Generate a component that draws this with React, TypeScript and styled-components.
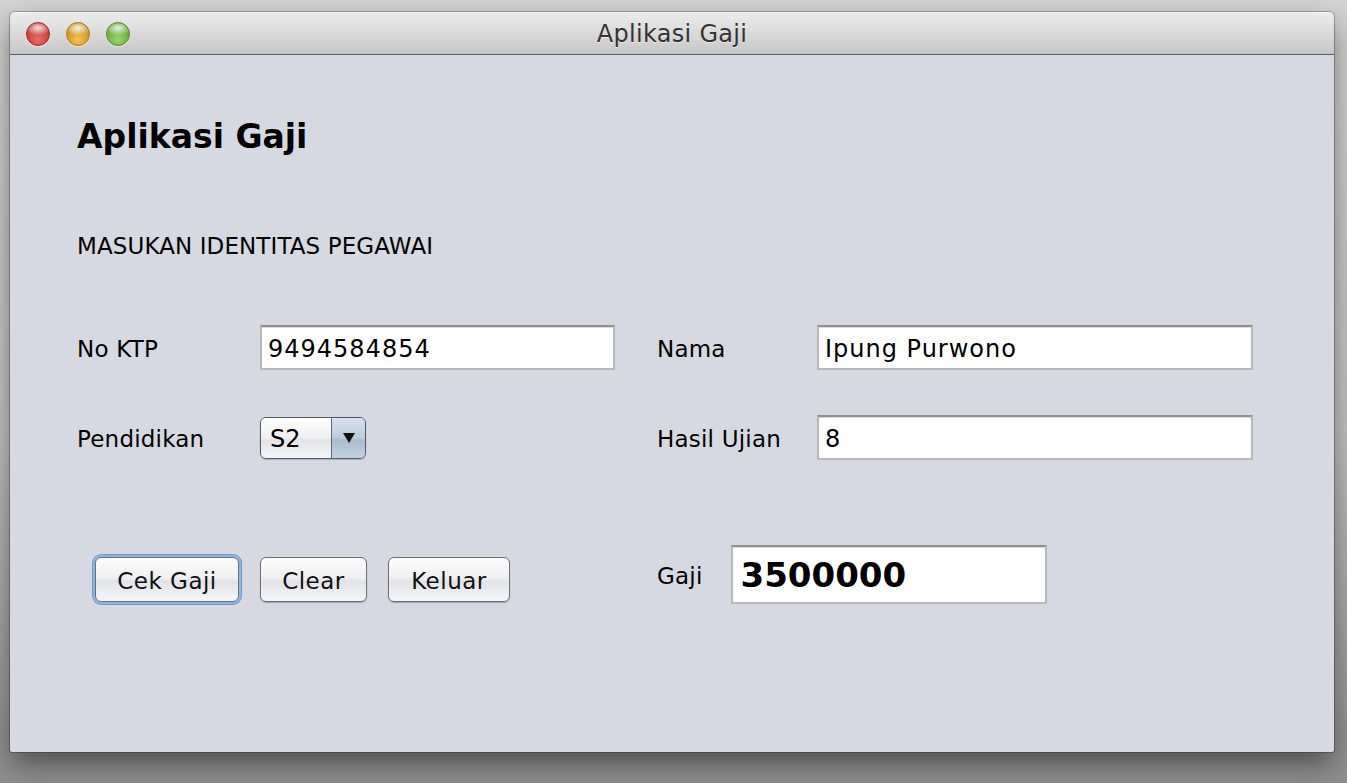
import styled, { createGlobalStyle } from 'styled-components'

const GlobalStyle = createGlobalStyle`
  html, body {
    margin: 0;
    padding: 0;
  }
  body {
    width: 1347px;
    height: 783px;
    overflow: hidden;
    font-family: 'DejaVu Sans', 'Liberation Sans', sans-serif;
    background: linear-gradient(180deg, #d4d4d4 0%, #c4c4c4 55%, #8e8e8e 100%);
  }
`

const Desktop = styled.div`
  position: relative;
  width: 1347px;
  height: 783px;
`

const Window = styled.div`
  position: absolute;
  left: 10px;
  top: 12px;
  width: 1324px;
  height: 740px;
  display: flex;
  flex-direction: column;
  border-radius: 5px 5px 2px 2px;
  overflow: hidden;
  background: #d6d9e1;
  box-shadow: 0 12px 28px rgba(0, 0, 0, 0.45), 0 0 0 1px rgba(0, 0, 0, 0.25);
`

const TitleBar = styled.div`
  position: relative;
  height: 42px;
  flex: none;
  display: flex;
  align-items: center;
  justify-content: center;
  background: linear-gradient(180deg, #ededed 0%, #dcdcdc 45%, #c6c6c6 100%);
  border-bottom: 1px solid #5e5e5e;
  box-shadow: inset 0 1px 0 #f6f6f6;
`

const Lights = styled.div`
  position: absolute;
  left: 16px;
  top: 10px;
  display: flex;
  gap: 16px;
`

const Light = styled.span<{ $c: string; $d: string }>`
  width: 24px;
  height: 24px;
  border-radius: 50%;
  box-sizing: border-box;
  border: 1px solid ${(p) => p.$d};
  background:
    radial-gradient(ellipse 60% 35% at 50% 22%, rgba(255, 255, 255, 0.85), rgba(255, 255, 255, 0) 100%),
    radial-gradient(circle at 50% 75%, ${(p) => p.$c} 0%, ${(p) => p.$d} 100%);
  box-shadow: 0 1px 1px rgba(255, 255, 255, 0.6);
`

const WindowTitle = styled.span`
  font-size: 24px;
  color: #333;
  text-shadow: 0 1px 0 rgba(255, 255, 255, 0.6);
  letter-spacing: 0.3px;
  margin-top: 2px;
`

const Content = styled.div`
  flex: 1;
  display: flex;
  flex-direction: column;
  padding: 61px 0 0 67px;
  color: #000;
`

const Heading = styled.h1`
  margin: 0;
  font-size: 33px;
  line-height: 42px;
  font-weight: bold;
`

const SubHeading = styled.div`
  margin-top: 74px;
  font-size: 23px;
  line-height: 28px;
  letter-spacing: 0.1px;
`

const FormGrid = styled.div`
  margin-top: 65px;
  display: grid;
  grid-template-columns: 183px 397px 160px 436px;
  grid-auto-rows: 45px;
  row-gap: 45px;
  align-items: center;
`

const Label = styled.label`
  font-size: 23px;
  line-height: 28px;
  letter-spacing: 0.2px;
  padding-top: 2px;
`

const TextField = styled.input<{ $w?: number; $h?: number; $big?: boolean }>`
  box-sizing: border-box;
  width: ${(p) => (p.$w ? `${p.$w}px` : '100%')};
  height: ${(p) => (p.$h ? `${p.$h}px` : '45px')};
  margin: 0;
  padding: ${(p) => (p.$big ? '0 0 0 8px' : '2px 0 0 6px')};
  font-family: inherit;
  font-size: ${(p) => (p.$big ? '34px' : '24px')};
  font-weight: ${(p) => (p.$big ? 'bold' : 'normal')};
  letter-spacing: ${(p) => (p.$big ? '0' : '1px')};
  color: #000;
  background: #fff;
  border: 2px solid #b9b9b9;
  border-top-color: #8f8f8f;
  box-shadow: inset 0 1px 1px #d8d8d8;
  outline: none;
`

const Combo = styled.div`
  box-sizing: border-box;
  width: 106px;
  height: 42px;
  display: flex;
  border: 1px solid #4f5a67;
  border-radius: 6px;
  overflow: hidden;
  box-shadow: 0 1px 1px rgba(0, 0, 0, 0.2);
`

const ComboValue = styled.div`
  flex: 1;
  display: flex;
  align-items: center;
  padding: 2px 0 0 9px;
  font-size: 24px;
  background: linear-gradient(180deg, #ffffff 0%, #efeff1 50%, #e3e4e8 55%, #f4f5f8 100%);
`

const ComboArrow = styled.div`
  width: 33px;
  display: flex;
  align-items: center;
  justify-content: center;
  border-left: 1px solid #5d6877;
  background: linear-gradient(180deg, #d9e2ec 0%, #bccbdb 50%, #a9bccf 55%, #c3d2e1 100%);
`

const ActionRow = styled.div`
  margin-top: 85px;
  display: flex;
  align-items: center;
  height: 59px;
`

const Buttons = styled.div`
  align-self: flex-end;
  margin: 0 0 2px 18px;
  display: flex;
  align-items: center;
  gap: 21px;
`

const Button = styled.button<{ $w: number; $focus?: boolean }>`
  box-sizing: border-box;
  width: ${(p) => p.$w}px;
  height: 45px;
  margin: 0;
  padding: 2px 0 0;
  font-family: inherit;
  font-size: 23px;
  letter-spacing: 0.5px;
  color: #111;
  border: 1px solid #6f6f72;
  border-radius: 6px;
  background: linear-gradient(180deg, #fdfdfd 0%, #f0f0f2 45%, #e2e3e7 55%, #f5f6fa 100%);
  box-shadow: ${(p) =>
    p.$focus
      ? '0 0 0 2px #8fb6e0, 0 0 0 3px #6d9bcf'
      : '0 1px 1px rgba(0, 0, 0, 0.25)'};
  cursor: default;
`

const GajiGroup = styled.div`
  display: flex;
  align-items: center;
  margin-left: 147px;
  gap: 28px;
`

export default function App() {
  return (
    <Desktop>
      <GlobalStyle />
      <Window>
        <TitleBar>
          <Lights>
            <Light $c="#f26a60" $d="#a8231d" />
            <Light $c="#f7c34a" $d="#b07a12" />
            <Light $c="#9bd86a" $d="#4f8e25" />
          </Lights>
          <WindowTitle>Aplikasi Gaji</WindowTitle>
        </TitleBar>
        <Content>
          <Heading>Aplikasi Gaji</Heading>
          <SubHeading>MASUKAN IDENTITAS PEGAWAI</SubHeading>
          <FormGrid>
            <Label htmlFor="ktp">No KTP</Label>
            <TextField id="ktp" $w={355} defaultValue="9494584854" />
            <Label htmlFor="nama">Nama</Label>
            <TextField id="nama" $w={436} defaultValue="Ipung Purwono" />
            <Label>Pendidikan</Label>
            <Combo>
              <ComboValue>S2</ComboValue>
              <ComboArrow>
                <svg width="12" height="10" viewBox="0 0 12 10">
                  <path d="M0 0 L12 0 L6 10 Z" fill="#111" />
                </svg>
              </ComboArrow>
            </Combo>
            <Label htmlFor="ujian">Hasil Ujian</Label>
            <TextField id="ujian" $w={436} defaultValue="8" />
          </FormGrid>
          <ActionRow>
            <Buttons>
              <Button $w={144} $focus>Cek Gaji</Button>
              <Button $w={107}>Clear</Button>
              <Button $w={122}>Keluar</Button>
            </Buttons>
            <GajiGroup>
              <Label htmlFor="gaji">Gaji</Label>
              <TextField id="gaji" $w={316} $h={59} $big defaultValue="3500000" />
            </GajiGroup>
          </ActionRow>
        </Content>
      </Window>
    </Desktop>
  )
}
